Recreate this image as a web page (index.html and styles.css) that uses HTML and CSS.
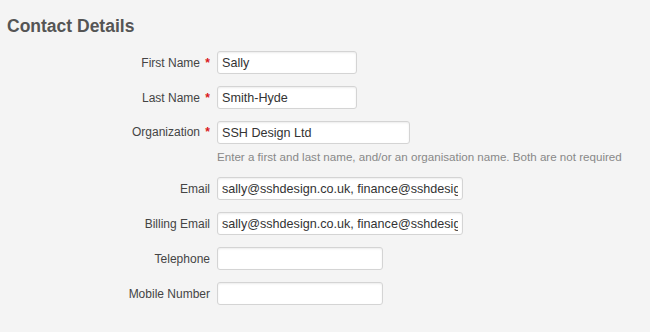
FILE: index.html
```html
<!DOCTYPE html>
<html lang="en">
<head>
  <meta charset="UTF-8" />
  <title>Contact Details</title>
  <link rel="stylesheet" href="styles.css">
</head>
<body>

  <h2 class="section-heading">Contact Details</h2>

  <form class="contact-form">
    <div class="form-row">
      <label class="form-label" for="firstName">First Name <span class="req">*</span></label>
      <input class="field field-short" type="text" id="firstName" value="Sally" />
    </div>

    <div class="form-row">
      <label class="form-label" for="lastName">Last Name <span class="req">*</span></label>
      <input class="field field-short" type="text" id="lastName" value="Smith-Hyde" />
    </div>

    <div class="form-row has-help">
      <label class="form-label" for="org">Organization <span class="req">*</span></label>
      <div class="field-wrap">
        <input class="field field-medium" type="text" id="org" value="SSH Design Ltd" />
        <div class="help-text">Enter a first and last name, and/or an organisation name. Both are not required</div>
      </div>
    </div>

    <div class="form-row">
      <label class="form-label" for="email">Email</label>
      <input class="field field-long" type="text" id="email" value="sally@sshdesign.co.uk, finance@sshdesign.co.uk" />
    </div>

    <div class="form-row">
      <label class="form-label" for="billingEmail">Billing Email</label>
      <input class="field field-long" type="text" id="billingEmail" value="sally@sshdesign.co.uk, finance@sshdesign.co.uk" />
    </div>

    <div class="form-row">
      <label class="form-label" for="phone">Telephone</label>
      <input class="field field-phone" type="text" id="phone" value="" />
    </div>

    <div class="form-row">
      <label class="form-label" for="mobile">Mobile Number</label>
      <input class="field field-phone" type="text" id="mobile" value="" />
    </div>
  </form>

</body>
</html>
```

FILE: styles.css
```css
body {
  margin: 0;
  padding: 15px 8px 0 7px;
  font-family: "Liberation Sans", Arial, sans-serif;
  font-size: 12px;
  background-color: #f4f4f4;
  color: #444;
}

.section-heading {
  margin: 0 0 14px 0;
  font-size: 17.5px;
  font-weight: bold;
  color: #555;
  line-height: 22px;
}

.contact-form {
  margin: 0;
}

.form-row {
  display: flex;
  align-items: center;
  margin-bottom: 12px;
}

.form-row.has-help {
  align-items: flex-start;
}

.form-row.has-help .form-label {
  line-height: 23px;
}

.form-label {
  width: 203px;
  flex-shrink: 0;
  text-align: right;
  color: #444;
  font-size: 12px;
}

.req {
  color: #d9171b;
  font-weight: bold;
  margin-left: 2px;
}

.field {
  margin-left: 7px;
  height: 23px;
  box-sizing: border-box;
  padding: 0 4px;
  border: 1px solid #d4d4d4;
  border-radius: 3px;
  background: #fff;
  box-shadow: inset 0 1px 2px rgba(0,0,0,0.08);
  font-family: "Liberation Sans", Arial, sans-serif;
  font-size: 12.6px;
  color: #333;
}

.field-wrap {
  display: flex;
  flex-direction: column;
}

.field-short { width: 140px; }
.field-medium { width: 193px; }
.field-long { width: 246px; }
.field-phone { width: 166px; }

.help-text {
  margin: 6px 0 1px 7px;
  color: #888;
  font-size: 11.6px;
  line-height: 14px;
}
```
